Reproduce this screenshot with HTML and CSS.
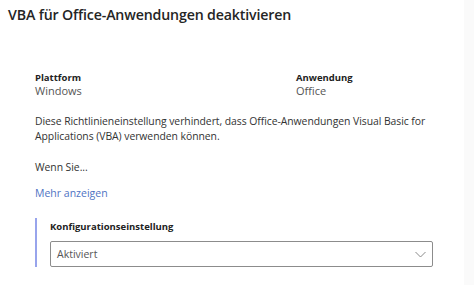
FILE: index.html
```html
<!DOCTYPE html>
<html lang="de">
<head>
<meta charset="utf-8">
<link rel="stylesheet" href="styles.css">
</head>
<body>
<div class="page">
  <main class="main">
    <h1 class="title">VBA für Office-Anwendungen deaktivieren</h1>
    <section class="content">
      <div class="meta">
        <div class="meta-item">
          <div class="label">Plattform</div>
          <div class="value">Windows</div>
        </div>
        <div class="meta-item">
          <div class="label">Anwendung</div>
          <div class="value">Office</div>
        </div>
      </div>
      <p class="desc">Diese Richtlinieneinstellung verhindert, dass Office-Anwendungen Visual Basic for Applications (VBA) verwenden können.</p>
      <p class="desc">Wenn Sie...</p>
      <a class="more" href="#">Mehr anzeigen</a>
      <div class="config">
        <div class="label">Konfigurationseinstellung</div>
        <div class="select">
          <span>Aktiviert</span>
          <svg class="chev" width="11" height="7" viewBox="0 0 11 7"><path d="M0.5 1 L5.5 6 L10.5 1" fill="none" stroke="#8a8a8a" stroke-width="1"/></svg>
        </div>
      </div>
    </section>
  </main>
  <aside class="strip"></aside>
</div>
</body>
</html>
```
FILE: styles.css
```css
html, body {
  margin: 0;
  padding: 0;
  background: #ffffff;
}
body {
  font-family: "Open Sans", "Noto Sans", sans-serif;
  color: #333;
  width: 474px;
  height: 285px;
  overflow: hidden;
}
.page {
  display: flex;
  height: 285px;
}
.main {
  flex: 1;
  padding: 0 0 0 8px;
}
.strip {
  width: 10px;
  background: #fafafa;
}
.title {
  margin: 0;
  padding-top: 5px;
  font-size: 14.2px;
  line-height: 20px;
  font-weight: 600;
  color: #252525;
  letter-spacing: -0.15px;
}
.content {
  padding: 47px 0 0 27px;
  width: 400px;
}
.meta {
  display: grid;
  grid-template-columns: 261px 1fr;
}
.label {
  font-size: 9.5px;
  font-weight: 700;
  line-height: 12px;
  color: #222;
}
.value {
  font-size: 11px;
  line-height: 13px;
  color: #555;
}
.desc {
  margin: 0;
  font-size: 10.4px;
  line-height: 15px;
  color: #333;
  padding-top: 17px;
  letter-spacing: -0.05px;
}
.desc + .desc {
  padding-top: 16px;
}
.more {
  display: block;
  padding-top: 10px;
  font-size: 10.5px;
  line-height: 16px;
  color: #4f73c3;
  text-decoration: none;
}
.config {
  margin-top: 17px;
  border-left: 2px solid #98a4ec;
  padding: 3px 0 0 13px;
  width: 383px;
}
.select {
  margin-top: 8px;
  height: 24px;
  border: 1px solid #8c8c8c;
  border-radius: 2px;
  display: flex;
  align-items: center;
  justify-content: space-between;
  padding: 0 6px;
  font-size: 10.5px;
  color: #555;
}
```
